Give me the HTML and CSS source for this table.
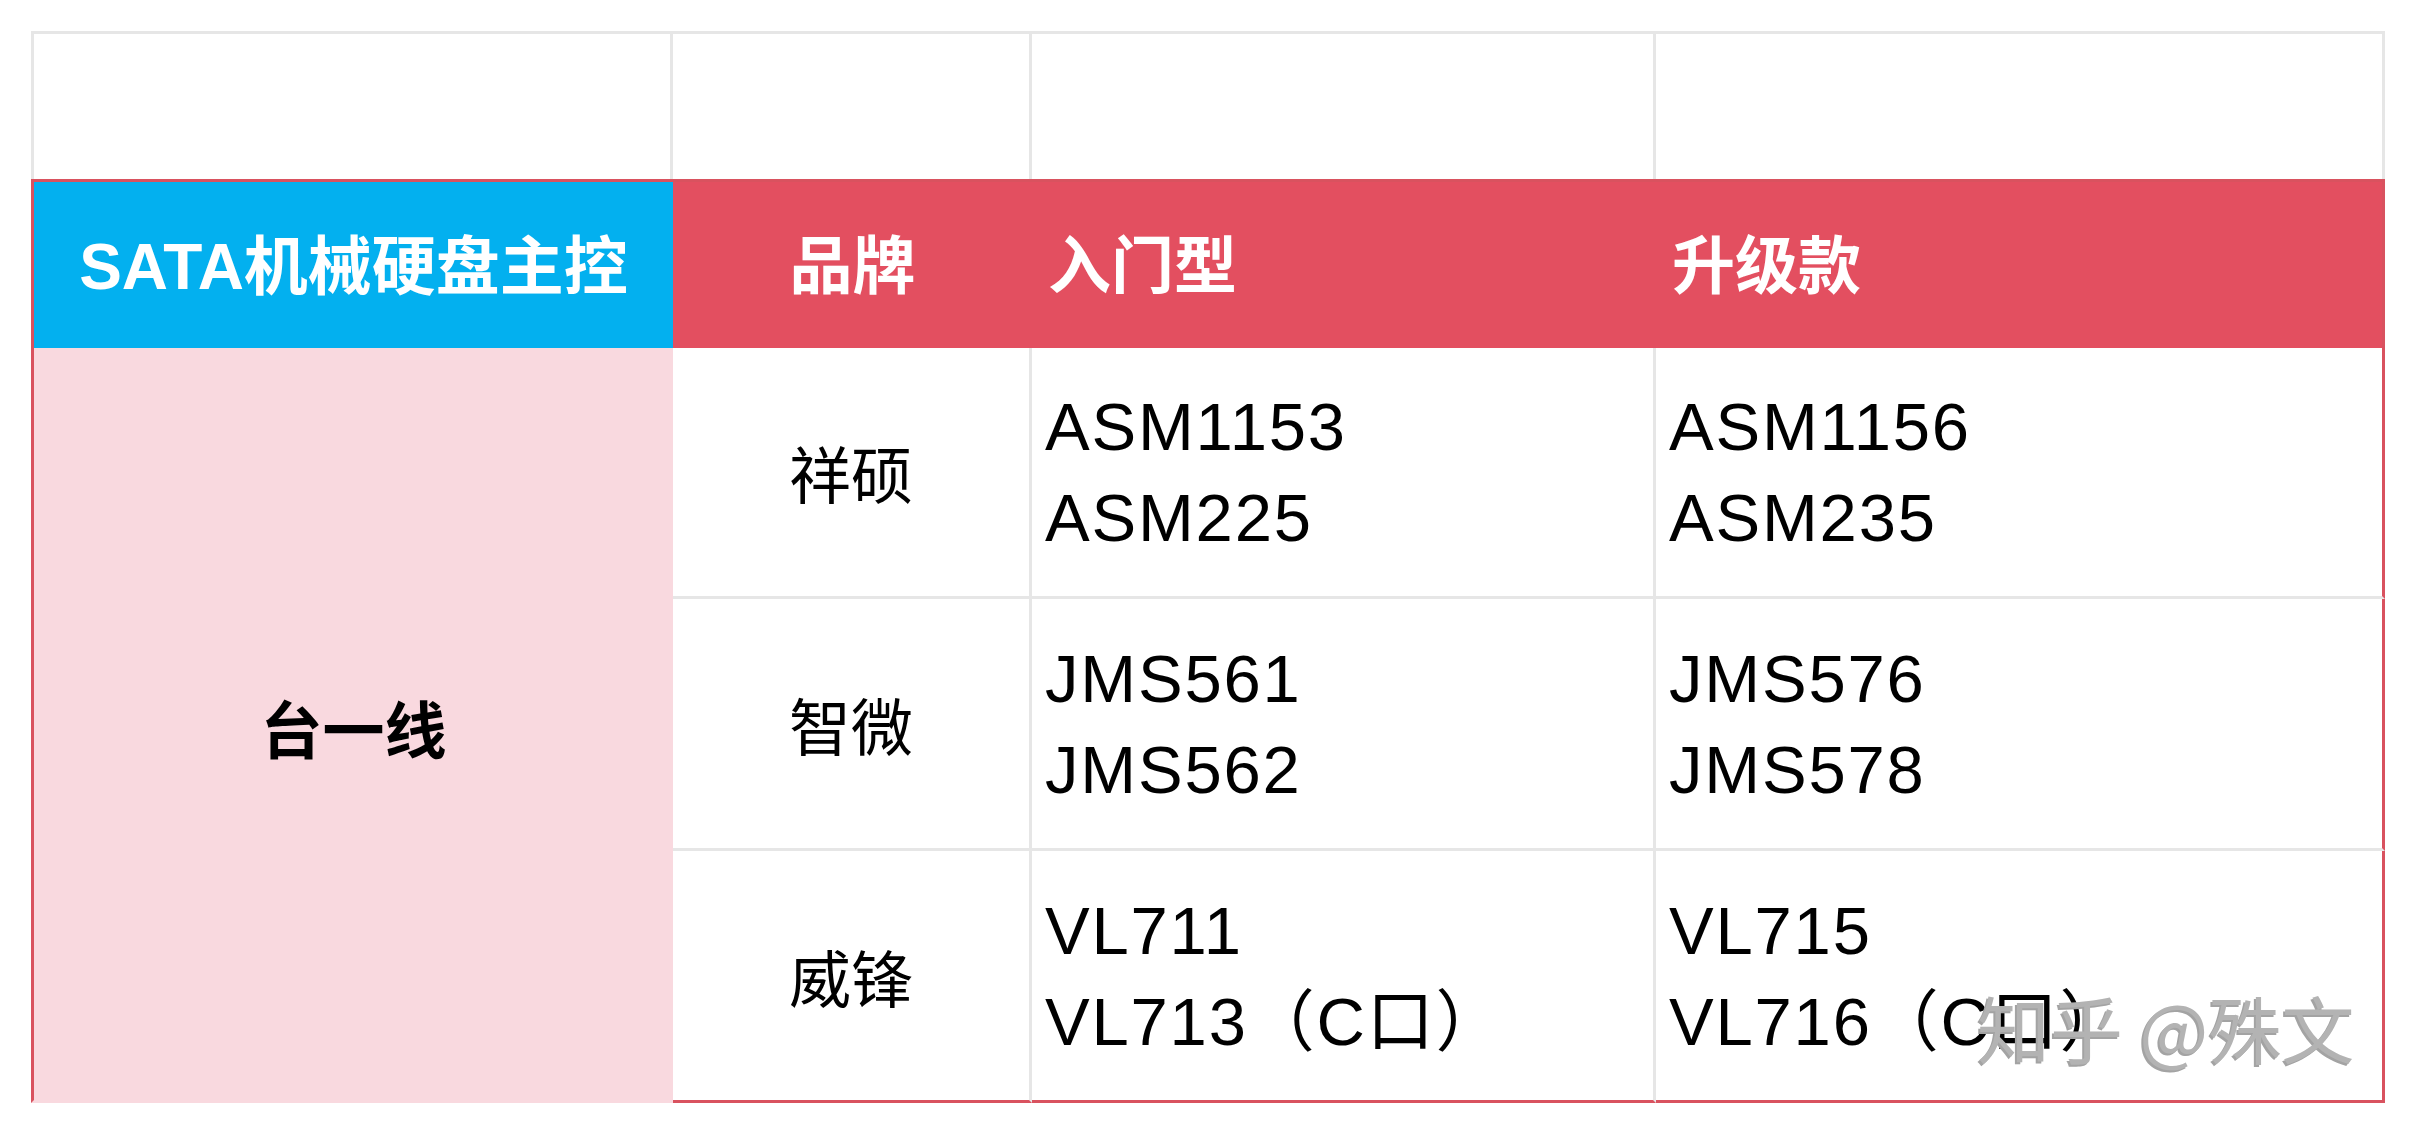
FILE: index.html
```html
<!DOCTYPE html>
<html lang="zh-CN">
<head>
<meta charset="utf-8">
<title>SATA机械硬盘主控</title>
<link rel="stylesheet" href="styles.css">
</head>
<body>
<div class="page">
  <table class="grid">
    <colgroup>
      <col class="c0"><col class="c1"><col class="c2"><col class="c3">
    </colgroup>
    <tr class="blank">
      <td class="first"></td><td></td><td></td><td class="last"></td>
    </tr>
    <tr class="head">
      <th class="title">SATA机械硬盘主控</th>
      <th class="hbrand">品牌</th>
      <th class="hmodel">入门型</th>
      <th class="hmodel last">升级款</th>
    </tr>
    <tr class="row r1">
      <td class="group" rowspan="3">台一线</td>
      <td class="brand">祥硕</td>
      <td class="model">ASM1153<br>ASM225</td>
      <td class="model last">ASM1156<br>ASM235</td>
    </tr>
    <tr class="row r2">
      <td class="brand">智微</td>
      <td class="model">JMS561<br>JMS562</td>
      <td class="model last">JMS576<br>JMS578</td>
    </tr>
    <tr class="row r3 end">
      <td class="brand">威锋</td>
      <td class="model">VL711<br>VL713（C口）</td>
      <td class="model last">VL715<br>VL716（C口）</td>
    </tr>
  </table>
  <div class="watermark">知乎 @殊文</div>
</div>
</body>
</html>
```

FILE: styles.css
```css
html, body {
  margin: 0;
  padding: 0;
  background: #ffffff;
}

.page {
  position: relative;
  width: 2416px;
  height: 1136px;
  padding: 31px 0 0 31px;
  box-sizing: border-box;
  font-family: "Liberation Sans", "Noto Sans CJK SC", sans-serif;
  color: #000;
}

.grid {
  border-collapse: separate;
  border-spacing: 0;
  table-layout: fixed;
  width: 2354px;
}

.c0 { width: 642px; }
.c1 { width: 359px; }
.c2 { width: 624px; }
.c3 { width: 729px; }

.grid td, .grid th {
  padding: 0;
  box-sizing: border-box;
}

/* blank top row */
.blank td {
  height: 148px;
  border-top: 3px solid #e6e6e6;
  border-right: 3px solid #e6e6e6;
}
.blank td.first { border-left: 3px solid #e6e6e6; }

/* header row */
.head th {
  height: 169px;
  background: #e34f60;
  color: #ffffff;
  font-weight: 700;
  font-size: 63px;
  border-top: 3px solid #d9525f;
  text-align: left;
  padding-left: 16px;
  padding-bottom: 9px;
  vertical-align: middle;
}
.head th.title {
  background: #03b0ef;
  border-left: 3px solid #d9525f;
  text-align: center;
  padding-left: 0;
  font-size: 64px;
}
.head th.hbrand {
  text-align: center;
  padding-left: 0;
}
.head th.last { border-right: 3px solid #d9525f; }

/* data rows */
.row td {
  vertical-align: middle;
  border-bottom: 3px solid #e6e6e6;
}
.r1 td { height: 251px; }
.r2 td, .r3 td { height: 252px; }

.row td.group {
  background: #f9d9df;
  border-left: 3px solid #d9525f;
  border-bottom: 3px solid #f9d9df;
  text-align: center;
  font-weight: 700;
  font-size: 62px;
  padding-top: 6px;
}

.row td.brand {
  text-align: center;
  font-size: 62px;
  border-right: 3px solid #e6e6e6;
}

.row td.model {
  font-size: 67px;
  letter-spacing: 1.8px;
  line-height: 91px;
  padding-left: 13px;
  border-right: 3px solid #e6e6e6;
}
.row td.model.last { border-right: 3px solid #d9525f; }

.end td.brand, .end td.model { border-bottom: 3px solid #d9525f; }

.watermark {
  position: absolute;
  left: 1977px;
  top: 981px;
  font-family: "Noto Sans CJK SC", sans-serif;
  font-size: 73px;
  line-height: 90px;
  color: #b3b3b3;
  text-shadow: -2px 2px 0 #a3a3a3;
  white-space: nowrap;
}
```
